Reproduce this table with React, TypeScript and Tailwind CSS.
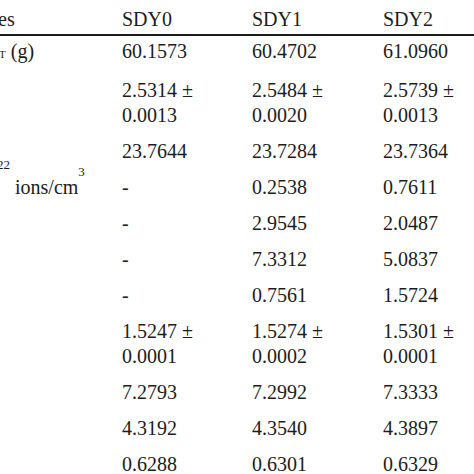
import React from 'react';

type Row = { label: React.ReactNode; values: string[][] };

const rows: Row[] = [
  {
    label: (
      <>
        <span className="-ml-[1px] text-[11px]">T</span> (g)
      </>
    ),
    values: [['60.1573'], ['60.4702'], ['61.0960']],
  },
  { label: '', values: [['2.5314 ±', '0.0013'], ['2.5484 ±', '0.0020'], ['2.5739 ±', '0.0013']] },
  { label: '', values: [['23.7644'], ['23.7284'], ['23.7364']] },
  {
    label: (
      <>
        <sup className="-ml-[3px] text-[13px] top-[-25px]">22</sup> ions/cm
        <sup className="text-[13px] top-[-18px]">3</sup>
      </>
    ),
    values: [['-'], ['0.2538'], ['0.7611']],
  },
  { label: '', values: [['-'], ['2.9545'], ['2.0487']] },
  { label: '', values: [['-'], ['7.3312'], ['5.0837']] },
  { label: '', values: [['-'], ['0.7561'], ['1.5724']] },
  { label: '', values: [['1.5247 ±', '0.0001'], ['1.5274 ±', '0.0002'], ['1.5301 ±', '0.0001']] },
  { label: '', values: [['7.2793'], ['7.2992'], ['7.3333']] },
  { label: '', values: [['4.3192'], ['4.3540'], ['4.3897']] },
  { label: '', values: [['0.6288'], ['0.6301'], ['0.6329']] },
];

export default function App() {
  return (
    <div
      className="w-[474px] h-[474px] overflow-hidden bg-white text-[#1c1c1c] text-[20px] leading-[25px]"
      style={{ fontFamily: '"Liberation Serif", "Times New Roman", serif' }}
    >
      <table className="w-full table-fixed border-collapse">
        <colgroup>
          <col className="w-[122px]" />
          <col className="w-[130px]" />
          <col className="w-[131px]" />
          <col />
        </colgroup>
        <thead>
          <tr className="border-b-2 border-[#1c1c1c]">
            <th className="text-left font-normal pt-[6.5px] pb-[2.5px] whitespace-nowrap">
              <span className="-ml-[2px]">es</span>
            </th>
            <th className="text-left font-normal pt-[6.5px] pb-[2.5px]">SDY0</th>
            <th className="text-left font-normal pt-[6.5px] pb-[2.5px]">SDY1</th>
            <th className="text-left font-normal pt-[6.5px] pb-[2.5px]">SDY2</th>
          </tr>
        </thead>
        <tbody>
          {rows.map((row, i) => (
            <tr key={i}>
              <td className="align-top pt-[3px] pb-[8px] whitespace-nowrap">{row.label}</td>
              {row.values.map((lines, j) => (
                <td key={j} className="align-top pt-[3px] pb-[8px] whitespace-nowrap">
                  {lines.map((line, k) => (
                    <div key={k}>{line}</div>
                  ))}
                </td>
              ))}
            </tr>
          ))}
        </tbody>
      </table>
    </div>
  );
}
